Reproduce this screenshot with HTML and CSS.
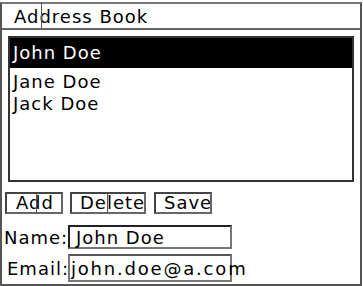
FILE: index.html
```html
<!DOCTYPE html>
<html>
<head>
<meta charset="utf-8">
<link rel="stylesheet" href="styles.css">
</head>
<body>
<div class="frame">
  <div class="titlebar"><span class="title">Address Book</span></div>
  <div class="list">
    <div class="item selected">John Doe</div>
    <div class="item first">Jane Doe</div>
    <div class="item">Jack Doe</div>
  </div>
  <div class="buttons">
    <div class="btn btn-add"><span>Add</span></div>
    <div class="btn btn-delete"><span>Delete</span></div>
    <div class="btn btn-save"><span>Save</span></div>
  </div>
  <div class="row row-name">
    <div class="label">Name:</div>
    <div class="field field-name"><span>John Doe</span></div>
  </div>
  <div class="row row-email">
    <div class="label">Email:</div>
    <div class="field field-email"><span class="email-text">john.doe@a.com</span></div>
  </div>
</div>
</body>
</html>
```
FILE: styles.css
```css
html, body {
  margin: 0;
  padding: 0;
  background: #ffffff;
}
body {
  width: 363px;
  height: 286px;
  overflow: hidden;
  font-family: "DejaVu Sans", sans-serif;
  font-size: 18px;
  letter-spacing: 1px;
  color: #000;
}
.frame {
  box-sizing: border-box;
  margin-top: 2px;
  width: 362px;
  height: 284px;
  border: 2px solid #555;
  border-top-color: #777;
  display: flex;
  flex-direction: column;
}
.titlebar {
  position: relative;
  height: 24px;
  border-bottom: 2px solid #666;
  display: flex;
  align-items: center;
  padding-left: 12px;
}
.titlebar::after {
  content: "";
  position: absolute;
  left: 39px;
  top: -2px;
  bottom: 0;
  width: 1px;
  background: #555;
}
.list {
  box-sizing: border-box;
  margin: 6px 0 0 6px;
  width: 346px;
  height: 146px;
  border: 2px solid #333;
  display: flex;
  flex-direction: column;
}
.item {
  height: 22px;
  line-height: 22px;
  padding-left: 3px;
  white-space: nowrap;
}
.item.selected {
  height: 30px;
  line-height: 30px;
  background: #000;
  color: #fff;
}
.item.first {
  margin-top: 3px;
}
.buttons {
  display: flex;
  margin-top: 10px;
  margin-left: 3px;
  gap: 7px;
}
.btn {
  position: relative;
  box-sizing: border-box;
  height: 22px;
  border: 2px solid #444;
  border-right-color: #666;
  border-bottom-color: #666;
  line-height: 18px;
  white-space: nowrap;
  overflow: hidden;
  background: #fff;
}
.btn-add { width: 58px; padding-left: 9px; }
.btn-delete { width: 76px; padding-left: 8px; }
.btn-save { width: 58px; padding-left: 8px; margin-left: 1px; }
.btn-add::after, .btn-delete::after {
  content: "";
  position: absolute;
  top: 0;
  bottom: 0;
  width: 1px;
  background: #555;
}
.btn-add::after { left: 29px; }
.btn-delete::after { left: 35px; }
.row {
  display: flex;
  align-items: center;
}
.row-name {
  margin-top: 11px;
  height: 24px;
}
.row-email {
  margin-top: 5px;
  height: 28px;
}
.label {
  width: 66px;
  padding-left: 2px;
  box-sizing: border-box;
  white-space: nowrap;
}
.row-email .label { padding-left: 5px; }
.field {
  box-sizing: border-box;
  width: 164px;
  height: 100%;
  padding-left: 6px;
  white-space: nowrap;
  display: flex;
  align-items: center;
  overflow: visible;
}
.field-name {
  border: 2px solid #222;
  border-right-color: #777;
  border-bottom-color: #777;
}
.field-email {
  border: 2px solid #777;
  border-top-color: #555;
  padding-left: 1px;
}
.email-text {
  letter-spacing: 1.8px;
}
```
